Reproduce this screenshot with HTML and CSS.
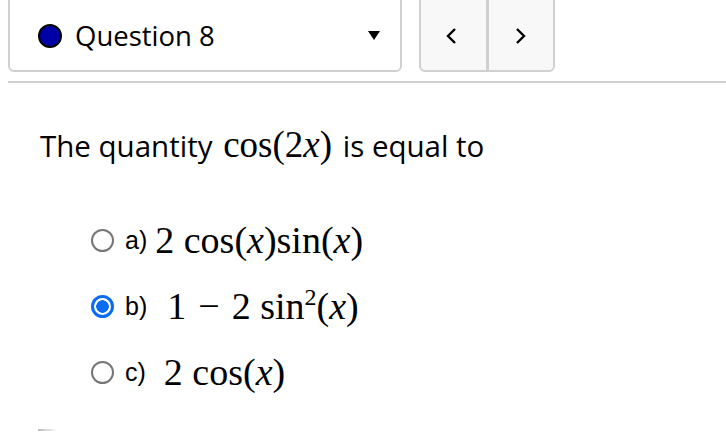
FILE: index.html
```html
<!DOCTYPE html>
<html lang="en">
<head>
    <meta charset="UTF-8">
    <title>Question 8</title>
    <link rel="stylesheet" href="styles.css">
</head>
<body>
    <div class="top-bar">
        <div class="question-select">
            <span class="status-dot"></span>
            <span class="select-label">Question 8</span>
            <span class="caret"></span>
        </div>
        <div class="nav-group">
            <button class="nav-btn" aria-label="Previous">
                <svg width="14" height="20" viewBox="0 0 14 20"><path d="M11 3 L4 10 L11 17" fill="none" stroke="#000" stroke-width="2.4"/></svg>
            </button>
            <button class="nav-btn" aria-label="Next">
                <svg width="14" height="20" viewBox="0 0 14 20"><path d="M3 3 L10 10 L3 17" fill="none" stroke="#000" stroke-width="2.4"/></svg>
            </button>
        </div>
    </div>
    <hr class="divider">

    <p class="question">The quantity <span class="tex tex-inline">cos(2<i>x</i>)</span> is equal to</p>

    <div class="options">
        <label class="option">
            <span class="radio"></span>
            <span class="opt-label">a)</span>
            <span class="tex">2 cos(<i>x</i>)sin(<i>x</i>)</span>
        </label>
        <label class="option">
            <span class="radio checked"></span>
            <span class="opt-label">b)</span>
            <span class="tex tex-b">1<span class="op">&minus;</span>2 sin<sup>2</sup>(<i>x</i>)</span>
        </label>
        <label class="option">
            <span class="radio"></span>
            <span class="opt-label">c)</span>
            <span class="tex tex-c">2 cos(<i>x</i>)</span>
        </label>
    </div>

    <div class="scroll-hint"></div>
</body>
</html>
```

FILE: styles.css
```css
body {
    margin: 0;
    padding: 0 0 0 8px;
    font-family: "Open Sans", "Noto Sans", sans-serif;
    color: #000;
    background: #fff;
    overflow: hidden;
}

.top-bar {
    display: flex;
    gap: 17px;
    margin-top: -6px;
}

.question-select {
    display: flex;
    align-items: center;
    box-sizing: border-box;
    width: 394px;
    height: 78px;
    padding: 4px 20px 0 28px;
    border: 2px solid #d0d0d0;
    border-radius: 6px;
}

.status-dot {
    width: 20px;
    height: 20px;
    border: 2px solid #000;
    border-radius: 50%;
    background: #0000a8;
    margin-top: 2px;
}

.select-label {
    margin-left: 13px;
    font-size: 27.5px;
    flex: 1;
}

.caret {
    width: 0;
    height: 0;
    border-left: 6px solid transparent;
    border-right: 6px solid transparent;
    border-top: 9px solid #000;
}

.nav-group {
    display: flex;
    box-sizing: border-box;
    width: 136px;
    height: 78px;
    border: 2px solid #d0d0d0;
    border-radius: 6px;
    background: #f8f8f8;
    overflow: hidden;
}

.nav-btn {
    flex: 1;
    border: none;
    background: transparent;
    padding: 6px 0 0;
    display: flex;
    align-items: center;
    justify-content: center;
}

.nav-btn:first-child svg {
    margin-left: -4px;
}

.nav-btn + .nav-btn {
    border-left: 3px solid #d0d0d0;
}

.divider {
    margin: 9px 0 0;
    border: none;
    border-top: 2px solid #d0d0d0;
}

.question {
    margin: 41px 0 0 32px;
    font-size: 29.5px;
    line-height: 44px;
}

.tex {
    font-family: "Liberation Serif", serif;
    font-size: 38px;
    line-height: 1;
}

.tex-inline {
    font-size: 37px;
    margin: 0 3px;
}

.tex i {
    font-style: italic;
}

.tex sup {
    font-size: 24px;
    line-height: 0;
}

.tex .op {
    margin: 0 12px;
}

.options {
    display: flex;
    flex-direction: column;
    gap: 22px;
    margin: 50px 0 0 83px;
}

.option {
    display: flex;
    align-items: center;
    height: 44px;
}

.radio {
    box-sizing: border-box;
    width: 23px;
    height: 23px;
    border: 2px solid #767676;
    border-radius: 50%;
}

.radio.checked {
    border: 3px solid #0a6cf5;
    background: radial-gradient(circle, #0a6cf5 0 6px, #fff 6.5px);
}

.opt-label {
    margin-left: 11px;
    margin-right: 8px;
    font-family: "Liberation Sans", Arial, sans-serif;
    font-size: 25px;
}

.tex-b {
    margin-left: 12px;
}

.tex-c {
    margin-left: 10px;
}

.scroll-hint {
    width: 20px;
    height: 2px;
    margin: 35px 0 0 30px;
    background: linear-gradient(to right, #bbb, #fff);
}
```
